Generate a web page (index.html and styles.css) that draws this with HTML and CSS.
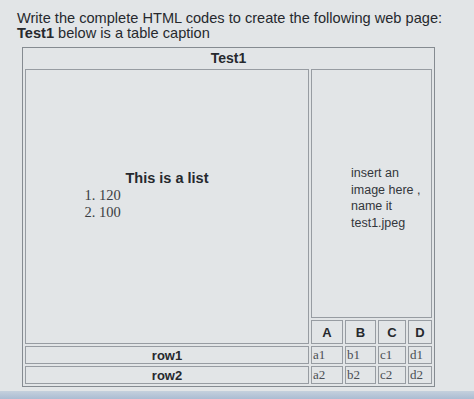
FILE: index.html
```html
<!DOCTYPE html>
<html>
<head>
<meta charset="utf-8">
<link rel="stylesheet" href="styles.css">
</head>
<body>
<p class="intro">Write the complete HTML codes to create the following web page:<br><b>Test1</b> below is a table caption</p>
<div class="frame">
  <div class="cap">Test1</div>
  <table class="grid">
    <colgroup>
      <col class="c-main"><col class="c-a"><col class="c-b"><col class="c-c"><col class="c-d">
    </colgroup>
    <tr class="r-top">
      <td rowspan="2" class="list-cell">
        <h4 class="list-title">This is a list</h4>
        <ol class="nums">
          <li>120</li>
          <li>100</li>
        </ol>
      </td>
      <td colspan="4" class="img-cell"><span class="alt">insert an image here , name it test1.jpeg</span></td>
    </tr>
    <tr class="r-head">
      <th>A</th><th>B</th><th>C</th><th>D</th>
    </tr>
    <tr class="r-data">
      <th class="row-label">row1</th><td>a1</td><td>b1</td><td>c1</td><td>d1</td>
    </tr>
    <tr class="r-data">
      <th class="row-label">row2</th><td>a2</td><td>b2</td><td>c2</td><td>d2</td>
    </tr>
  </table>
</div>
<div class="band"></div>
</body>
</html>
```

FILE: styles.css
```css
html, body {
  margin: 0;
  padding: 0;
  background: #e2e5e7;
}
body {
  width: 474px;
  height: 399px;
  overflow: hidden;
  color: #26292e;
  font-family: "Liberation Sans", Arial, sans-serif;
}
.intro {
  margin: 0;
  padding: 11px 0 0 17px;
  font-size: 14.6px;
  line-height: 15px;
  white-space: nowrap;
}
.frame {
  margin: 6px 0 0 22px;
  width: 411px;
  border: 1px solid #858b91;
}
.cap {
  text-align: center;
  font-weight: bold;
  font-size: 14px;
  line-height: 18px;
  padding-top: 1px;
}
.grid {
  border-collapse: separate;
  border-spacing: 2px;
  table-layout: fixed;
  width: 411px;
}
.c-main { width: 284px; }
.c-a { width: 32px; }
.c-b { width: 31px; }
.c-c { width: 28px; }
.c-d { width: 24px; }
.grid td, .grid th {
  border: 1px solid #979ca2;
  padding: 0;
  box-sizing: border-box;
}
.r-top { height: 249px; }
.r-head { height: 24px; }
.r-data { height: 18px; }
.list-cell {
  vertical-align: top;
  padding-top: 100px !important;
}
.list-title {
  margin: 0;
  text-align: center;
  font-size: 14.5px;
  line-height: 17px;
  font-weight: bold;
}
.nums {
  margin: 0 0 0 33px;
  padding-left: 40px;
  font-family: "Liberation Serif", "Times New Roman", serif;
  font-size: 14.5px;
  line-height: 17px;
  color: #3a3d42;
}
.img-cell {
  vertical-align: top;
  padding: 95px 0 0 39px !important;
}
.alt {
  display: block;
  width: 74px;
  font-size: 12.5px;
  line-height: 16.7px;
  color: #33363b;
}
.r-head th {
  font-size: 13px;
  font-weight: bold;
  text-align: center;
  vertical-align: middle;
}
.r-data th {
  font-size: 13px;
  font-weight: bold;
  text-align: center;
  vertical-align: middle;
}
.r-data td {
  font-family: "Liberation Serif", "Times New Roman", serif;
  font-size: 13px;
  color: #4a4e54;
  padding: 0 1px;
  vertical-align: middle;
}
.band {
  margin-top: 4px;
  height: 9px;
  background: linear-gradient(#c5d0dd, #a8bad1);
}
```
